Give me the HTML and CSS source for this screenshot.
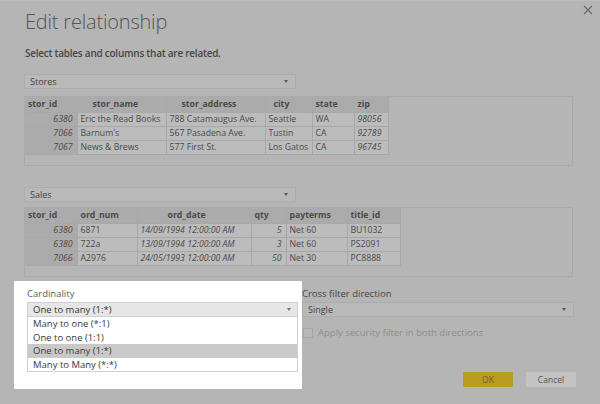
FILE: index.html
```html
<!DOCTYPE html>
<html>
<head>
<meta charset="utf-8">
<link rel="stylesheet" href="styles.css">
</head>
<body>
<div class="dialog">
  <button class="close" aria-label="Close">
    <svg width="10" height="10" viewBox="0 0 10 10"><path d="M1 1 L9 9 M9 1 L1 9" stroke="#6a6a6a" stroke-width="1.2" fill="none"/></svg>
  </button>
  <h1 class="title">Edit relationship</h1>
  <p class="subtitle">Select tables and columns that are related.</p>

  <div class="select table-select"><span>Stores</span><i class="caret"></i></div>
  <div class="preview">
    <table class="grid">
      <colgroup><col class="w52"><col class="w89"><col class="w99"><col class="w47"><col class="w42"><col class="w34"></colgroup>
      <tr><th class="key">stor_id</th><th class="pl15">stor_name</th><th class="pl15">stor_address</th><th class="pl8">city</th><th>state</th><th>zip</th></tr>
      <tr><td class="key num">6380</td><td>Eric the Read Books</td><td>788 Catamaugus Ave.</td><td>Seattle</td><td>WA</td><td class="it">98056</td></tr>
      <tr><td class="key num">7066</td><td>Barnum's</td><td>567 Pasadena Ave.</td><td>Tustin</td><td>CA</td><td class="it">92789</td></tr>
      <tr><td class="key num">7067</td><td>News &amp; Brews</td><td>577 First St.</td><td>Los Gatos</td><td>CA</td><td class="it">96745</td></tr>
    </table>
  </div>

  <div class="select table-select sales"><span>Sales</span><i class="caret"></i></div>
  <div class="preview">
    <table class="grid">
      <colgroup><col class="w52"><col class="w60"><col class="w114"><col class="w35"><col class="w61"><col class="w53"></colgroup>
      <tr><th class="key">stor_id</th><th>ord_num</th><th class="pl30">ord_date</th><th>qty</th><th>payterms</th><th>title_id</th></tr>
      <tr><td class="key num">6380</td><td>6871</td><td class="it">14/09/1994 12:00:00 AM</td><td class="num">5</td><td>Net 60</td><td>BU1032</td></tr>
      <tr><td class="key num">6380</td><td>722a</td><td class="it">13/09/1994 12:00:00 AM</td><td class="num">3</td><td>Net 60</td><td>PS2091</td></tr>
      <tr><td class="key num">7066</td><td>A2976</td><td class="it">24/05/1993 12:00:00 AM</td><td class="num">50</td><td>Net 30</td><td>PC8888</td></tr>
    </table>
  </div>

  <div class="bottom">
    <div class="popup">
      <div class="label">Cardinality</div>
      <div class="select card-select"><span>One to many (1:*)</span><i class="caret"></i></div>
      <ul class="options">
        <li>Many to one (*:1)</li>
        <li>One to one (1:1)</li>
        <li class="active">One to many (1:*)</li>
        <li>Many to Many (*:*)</li>
      </ul>
    </div>
    <div class="cross">
      <div class="label dim-label">Cross filter direction</div>
      <div class="select cross-select"><span>Single</span><i class="caret"></i></div>
      <div class="check"><span class="box"></span><span>Apply security filter in both directions</span></div>
      <div class="buttons">
        <button class="btn ok">OK</button>
        <button class="btn cancel">Cancel</button>
      </div>
    </div>
  </div>
</div>
</body>
</html>
```

FILE: styles.css
```css
* { box-sizing: border-box; }
html, body { margin: 0; padding: 0; }
body {
  width: 600px;
  height: 404px;
  overflow: hidden;
  background: #b5b5b5;
  font-family: "Open Sans", "Noto Sans", sans-serif;
  color: #474747;
}
.dialog {
  position: relative;
  height: 404px;
  padding: 0 26px 0 24px;
  border-top: 1px solid #bcbcbc;
}
.close {
  position: absolute;
  top: 4px;
  right: 7px;
  width: 10px;
  height: 10px;
  padding: 0;
  border: 0;
  background: none;
  display: flex;
}
.title {
  margin: 9px 0 0 1px;
  font-size: 20px;
  line-height: 24px;
  font-weight: 300;
  color: #545454;
  letter-spacing: -0.2px;
}
.subtitle {
  margin: 12px 0 0 1px;
  font-size: 10px;
  line-height: 14px;
  font-weight: 600;
  color: #474747;
  letter-spacing: -0.25px;
}
.select {
  display: flex;
  align-items: center;
  justify-content: space-between;
  height: 15px;
  border: 1px solid #acacac;
  background: #b9b9b9;
  padding: 0 7px 0 5px;
  font-size: 9px;
  color: #454545;
}
.table-select {
  width: 272px;
  margin-top: 14px;
}
.caret {
  width: 0;
  height: 0;
  border-left: 2.5px solid transparent;
  border-right: 2.5px solid transparent;
  border-top: 3px solid #5a5a5a;
}
.preview {
  margin-top: 7px;
  height: 70px;
  border: 1px solid #aaaaaa;
  width: 549px;
}
.preview + .sales { margin-top: 21px; }
.sales + .preview { margin-top: 5px; }
.grid {
  border-collapse: collapse;
  table-layout: fixed;
  font-size: 8.7px;
  color: #4a4a4a;
}
.grid th, .grid td {
  border: 1px solid #a8a8a8;
  padding: 0 3px;
  white-space: nowrap;
  overflow: hidden;
  text-align: left;
}
.grid th {
  height: 15px;
  background: #ababab;
  font-weight: 700;
  border-top: 0;
}
.grid td {
  height: 14px;
  background: #bcbcbc;
}
.grid tr > :first-child { border-left: 0; }
.grid td.key, .grid th.key { background: #ababab; }
.grid .num { text-align: right; font-style: italic; padding-right: 4px; }
.grid .it { font-style: italic; }
.grid .pl15 { padding-left: 15px; }
.grid .pl30 { padding-left: 30px; }
.grid .pl8 { padding-left: 8px; }
.w52 { width: 52px; }
.w89 { width: 89px; }
.w99 { width: 99px; }
.w47 { width: 47px; }
.w42 { width: 42px; }
.w34 { width: 34px; }
.w60 { width: 60px; }
.w114 { width: 114px; }
.w35 { width: 35px; }
.w61 { width: 61px; }
.w53 { width: 53px; }

.bottom {
  display: flex;
  margin-top: 4px;
}
.popup {
  margin-left: -10px;
  width: 288px;
  background: #ffffff;
  padding: 6px 4px 17px 13px;
  border-radius: 1px;
}
.label {
  font-size: 9.5px;
  line-height: 14px;
  height: 15px;
  color: #5a5a5a;
}
.card-select {
  background: #e6e6e6;
  border-color: #cfcfcf;
  color: #333;
  font-size: 9.5px;
  padding-left: 5px;
  padding-right: 6px;
}
.card-select .caret { border-top-color: #777; }
.options {
  list-style: none;
  margin: 0;
  padding: 0;
  border: 1px solid #cfcfcf;
  border-top: 0;
  font-size: 9.5px;
  color: #3a3a3a;
}
.options li {
  height: 13.6px;
  line-height: 13.6px;
  padding-left: 5px;
}
.options li.active { background: #c9c9c9; }

.cross {
  width: 272px;
  padding-top: 6px;
  display: flex;
  flex-direction: column;
}
.dim-label { color: #454545; }
.cross-select { background: #b9b9b9; }
.check {
  display: flex;
  align-items: center;
  margin-top: 9px;
  margin-left: 1px;
  font-size: 9.5px;
  color: #8e8e8e;
}
.box {
  width: 10px;
  height: 10px;
  border: 1px solid #a5a5a5;
  background: #b8b8b8;
  margin-right: 5px;
}
.buttons {
  display: flex;
  justify-content: flex-end;
  gap: 13px;
  margin-top: 33px;
  margin-right: -2px;
}
.btn {
  width: 50px;
  height: 15px;
  border: 0;
  padding: 0;
  font-family: "Open Sans", "Noto Sans", sans-serif;
  font-size: 8.5px;
}
.ok { background: #b89c1e; color: #6d6030; }
.cancel { background: #c3c3c3; color: #555; }
```
